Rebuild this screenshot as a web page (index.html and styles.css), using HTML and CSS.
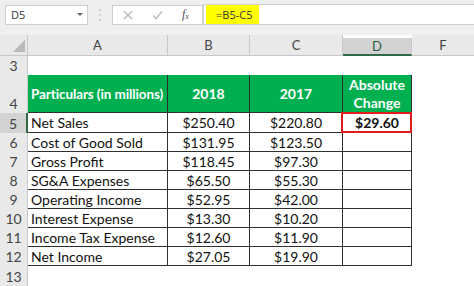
FILE: index.html
```html
<!DOCTYPE html>
<html lang="en">

<head>
    <meta charset="UTF-8">
    <meta name="viewport" content="width=device-width, initial-scale=1.0">
    <title>Absolute Change</title>
    <link rel="stylesheet" href="styles.css">
</head>

<body>
    <!-- Formula bar -->
    <div class="toolbar">
        <div class="namebox">
            <span>D5</span>
            <span class="caret"></span>
        </div>
        <svg class="grip" width="4" height="14" viewBox="0 0 4 14">
            <circle cx="2" cy="2" r="1" />
            <circle cx="2" cy="7" r="1" />
            <circle cx="2" cy="12" r="1" />
        </svg>
        <div class="fbuttons">
            <svg width="10" height="10" viewBox="0 0 10 10">
                <path d="M1 1 L9 9 M9 1 L1 9" />
            </svg>
            <svg width="11" height="10" viewBox="0 0 11 10">
                <path d="M1 5.5 L4 8.5 L10 1.5" />
            </svg>
            <span class="fx">f<sub>x</sub></span>
        </div>
        <div class="formula">
            <span class="hl">=B5-C5</span>
        </div>
    </div>

    <!-- Sheet -->
    <div class="sheet">
        <div class="corner"><span class="tri"></span></div>
        <div class="colhead">A</div>
        <div class="colhead">B</div>
        <div class="colhead">C</div>
        <div class="colhead sel">D</div>
        <div class="colhead last">F</div>

        <div class="rowhead">3</div>
        <div></div><div></div><div></div><div></div><div></div>

        <div class="rowhead">4</div>
        <div class="hd first left">Particulars (in millions)</div>
        <div class="hd">2018</div>
        <div class="hd">2017</div>
        <div class="hd">Absolute<br>Change</div>
        <div></div>

        <div class="rowhead sel">5</div>
        <div class="c first">Net Sales</div>
        <div class="c">$250.40</div>
        <div class="c">$220.80</div>
        <div class="c active">$29.60</div>
        <div></div>

        <div class="rowhead">6</div>
        <div class="c first">Cost of Good Sold</div>
        <div class="c">$131.95</div>
        <div class="c">$123.50</div>
        <div class="c"></div>
        <div></div>

        <div class="rowhead">7</div>
        <div class="c first">Gross Profit</div>
        <div class="c">$118.45</div>
        <div class="c">$97.30</div>
        <div class="c"></div>
        <div></div>

        <div class="rowhead">8</div>
        <div class="c first">SG&amp;A Expenses</div>
        <div class="c">$65.50</div>
        <div class="c">$55.30</div>
        <div class="c"></div>
        <div></div>

        <div class="rowhead">9</div>
        <div class="c first">Operating Income</div>
        <div class="c">$52.95</div>
        <div class="c">$42.00</div>
        <div class="c"></div>
        <div></div>

        <div class="rowhead">10</div>
        <div class="c first">Interest Expense</div>
        <div class="c">$13.30</div>
        <div class="c">$10.20</div>
        <div class="c"></div>
        <div></div>

        <div class="rowhead">11</div>
        <div class="c first">Income Tax Expense</div>
        <div class="c">$12.60</div>
        <div class="c">$11.90</div>
        <div class="c"></div>
        <div></div>

        <div class="rowhead">12</div>
        <div class="c first">Net Income</div>
        <div class="c">$27.05</div>
        <div class="c">$19.90</div>
        <div class="c"></div>
        <div></div>

        <div class="rowhead">13</div>
        <div></div><div></div><div></div><div></div><div></div>
    </div>
</body>

</html>
```

FILE: styles.css
```css
body {
    margin: 0;
    background-color: #fff;
    font-family: Lato, "Open Sans", sans-serif;
    overflow: hidden;
}

/* Formula bar */
.toolbar {
    display: flex;
    align-items: center;
    height: 35px;
    padding: 0 0 6px 5px;
    box-sizing: border-box;
    background-color: #efefef;
}

.namebox {
    display: flex;
    align-items: center;
    justify-content: space-between;
    width: 83px;
    height: 20px;
    box-sizing: border-box;
    padding: 0 4px 0 5px;
    background-color: #fff;
    border: 1px solid #d0d0d0;
    font-family: "Open Sans", sans-serif;
    font-size: 11px;
    color: #333;
}

.caret {
    width: 0;
    height: 0;
    border-left: 3px solid transparent;
    border-right: 3px solid transparent;
    border-top: 3px solid #666;
}

.grip {
    margin: 0 10px 0 10px;
    fill: #c4c4c4;
}

.fbuttons {
    display: flex;
    align-items: center;
    width: 91px;
    height: 20px;
    box-sizing: border-box;
    padding: 0 0 0 10px;
    gap: 19px;
    background-color: #fff;
    border: 1px solid #d0d0d0;
}

.fbuttons svg {
    fill: none;
    stroke: #b8b8b8;
    stroke-width: 1.3;
}

.fx {
    font-family: "Liberation Serif", serif;
    font-style: italic;
    font-size: 12px;
    color: #555;
}

.fx sub {
    font-size: 8px;
    vertical-align: -1px;
}

.formula {
    flex: 1;
    display: flex;
    align-items: center;
    height: 21px;
    box-sizing: border-box;
    padding-left: 2px;
    background-color: #fff;
    border: 1px solid #d0d0d0;
    border-right: none;
}

.hl {
    display: flex;
    align-items: center;
    height: 19px;
    padding: 0 7px 0 10px;
    background-color: #ffff00;
    font-family: "Open Sans", sans-serif;
    font-size: 11px;
    color: #333;
}

/* Sheet grid */
.sheet {
    display: grid;
    grid-template-columns: 28px 140px 82px 93px 69px 1fr;
    grid-template-rows: 21px 19px 38px 20px repeat(7, 19px) 20px;
    font-size: 14px;
    color: #111;
}

.sheet > div {
    box-sizing: border-box;
}

.corner {
    position: relative;
    background-color: #e9e9e9;
    border-right: 1px solid #c8c8c8;
    border-bottom: 1px solid #c8c8c8;
}

.tri {
    position: absolute;
    right: 2px;
    bottom: 3px;
    width: 0;
    height: 0;
    border-left: 12px solid transparent;
    border-bottom: 12px solid #b9b9b9;
}

.colhead {
    display: flex;
    align-items: center;
    justify-content: center;
    background-color: #e9e9e9;
    border-right: 1px solid #c8c8c8;
    border-bottom: 1px solid #c8c8c8;
    font-size: 13px;
    color: #444;
}

.colhead.last {
    border-right: none;
}

.colhead.sel {
    margin-top: 3px;
    background-color: #d3d3d3;
    border-bottom: 2px solid #2e6b46;
    color: #2e5a40;
}

.rowhead {
    display: flex;
    align-items: flex-end;
    justify-content: center;
    padding-bottom: 1px;
    background-color: #e9e9e9;
    border-right: 1px solid #c8c8c8;
    color: #444;
}

.rowhead.sel {
    background-color: #d3d3d3;
    border-right: 2px solid #2e6b46;
}

/* Table cells */
.hd {
    display: flex;
    align-items: center;
    justify-content: center;
    text-align: center;
    line-height: 18px;
    background-color: #00b050;
    border-right: 1px solid #2f2f2f;
    border-bottom: 1px solid #2f2f2f;
    color: #fff;
    font-weight: bold;
}

.hd.left {
    justify-content: flex-start;
    padding-left: 3px;
    white-space: nowrap;
    font-size: 13.5px;
    letter-spacing: -0.1px;
}

.c {
    display: flex;
    align-items: center;
    justify-content: center;
    border-right: 1px solid #2f2f2f;
    border-bottom: 1px solid #2f2f2f;
}

.c.first {
    justify-content: flex-start;
    padding-left: 3px;
}

.active {
    position: relative;
    font-weight: bold;
}

.active::after {
    content: "";
    position: absolute;
    left: -2px;
    top: -1px;
    right: -1px;
    bottom: -1px;
    border: 2px solid #e01e1e;
}
```
